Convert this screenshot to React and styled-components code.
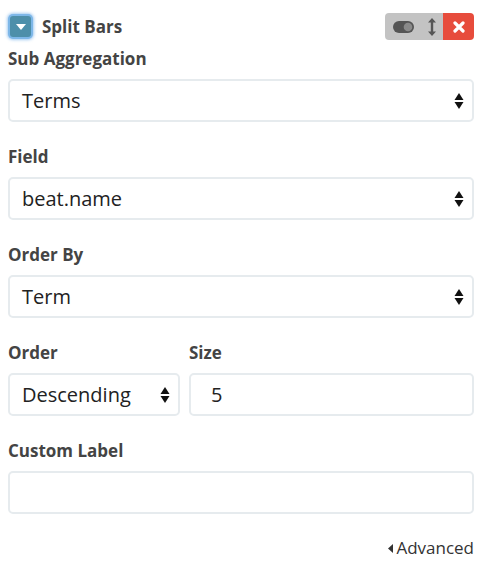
import React from 'react';
import styled, { createGlobalStyle } from 'styled-components';

const GlobalStyle = createGlobalStyle`
  html, body {
    margin: 0;
    padding: 0;
    background: #fff;
  }
  body {
    font-family: "Open Sans", "Noto Sans", "Liberation Sans", sans-serif;
  }
`;

const Panel = styled.div`
  width: 480px;
  box-sizing: border-box;
  padding: 13px 6px 0 8px;
`;

const Header = styled.div`
  display: flex;
  align-items: center;
  height: 27px;
  margin-bottom: 8px;
`;

const ToggleButton = styled.button`
  width: 21px;
  height: 21px;
  margin: 0 0 0 2px;
  padding: 0;
  border: none;
  border-radius: 3px;
  background: #4d8faa;
  box-shadow: 0 0 0 2px #7db7e8, 0 0 3px 3px rgba(90, 160, 230, 0.55);
  display: flex;
  align-items: center;
  justify-content: center;
`;

const Title = styled.span`
  margin-left: 11px;
  font-size: 17px;
  font-weight: 700;
  color: #444;
`;

const ButtonGroup = styled.div`
  margin-left: auto;
  display: flex;
  height: 27px;
  border-radius: 4px;
  overflow: hidden;
`;

const GroupButton = styled.div`
  display: flex;
  align-items: center;
  justify-content: center;
  width: ${p => p.$w}px;
  background: ${p => (p.$danger ? '#e74c3c' : '#c3c3c3')};
`;

const Group = styled.div`
  margin-bottom: 24px;
  flex: ${p => p.$flex || 'none'};
`;

const Row = styled.div`
  display: flex;
  gap: 9px;
`;

const Label = styled.div`
  font-size: 17px;
  line-height: 22px;
  font-weight: 700;
  color: #444;
  margin-bottom: 9px;
`;

const Box = styled.div`
  position: relative;
  box-sizing: border-box;
  height: 43px;
  width: ${p => (p.$w ? `${p.$w}px` : '100%')};
  border: 2px solid #e6ebee;
  border-radius: 5px;
  background: #fff;
  display: flex;
  align-items: center;
  padding-left: ${p => p.$pad || 12}px;
  font-size: 20px;
  color: #222;
`;

const Arrows = styled.svg`
  position: absolute;
  right: 8px;
  top: 50%;
  transform: translateY(-50%);
`;

const Footer = styled.div`
  display: flex;
  justify-content: flex-end;
  align-items: center;
  gap: 3px;
  font-size: 17px;
  line-height: 22px;
  color: #333;
  margin-top: -1px;
`;

const SelectArrows = () => (
  <Arrows width="10" height="18" viewBox="0 0 10 18">
    <path d="M5 1 L9.5 8 L0.5 8 Z" fill="#111" />
    <path d="M0.5 10 L9.5 10 L5 17 Z" fill="#111" />
  </Arrows>
);

const Select = ({ value, w }) => (
  <Box $w={w}>
    {value}
    <SelectArrows />
  </Box>
);

const Field = ({ label, children, flex }) => (
  <Group $flex={flex}>
    <Label>{label}</Label>
    {children}
  </Group>
);

export default function App() {
  return (
    <>
      <GlobalStyle />
      <Panel>
        <Header>
          <ToggleButton>
            <svg width="10" height="6" viewBox="0 0 10 6">
              <path d="M0 0 L10 0 L5 6 Z" fill="#fff" />
            </svg>
          </ToggleButton>
          <Title>Split Bars</Title>
          <ButtonGroup>
            <GroupButton $w={36}>
              <svg width="21" height="12" viewBox="0 0 21 12">
                <rect x="0" y="0" width="21" height="12" rx="6" fill="#555" />
                <circle cx="15" cy="6" r="4.3" fill="#8a8a8a" />
              </svg>
            </GroupButton>
            <GroupButton $w={22}>
              <svg width="8" height="18" viewBox="0 0 8 18">
                <path d="M4 0 L8 4.5 L5.2 4.5 L5.2 13.5 L8 13.5 L4 18 L0 13.5 L2.8 13.5 L2.8 4.5 L0 4.5 Z" fill="#555" />
              </svg>
            </GroupButton>
            <GroupButton $w={31} $danger>
              <svg width="12" height="12" viewBox="0 0 12 12">
                <path d="M2 2 L10 10 M10 2 L2 10" stroke="#fff" strokeWidth="3.2" strokeLinecap="round" />
              </svg>
            </GroupButton>
          </ButtonGroup>
        </Header>

        <Field label="Sub Aggregation">
          <Select value="Terms" />
        </Field>
        <Field label="Field">
          <Select value="beat.name" />
        </Field>
        <Field label="Order By">
          <Select value="Term" />
        </Field>
        <Row>
          <Field label="Order">
            <Select value="Descending" w={172} />
          </Field>
          <Field label="Size" flex="1">
            <Box $pad={20}>5</Box>
          </Field>
        </Row>
        <Field label="Custom Label">
          <Box />
        </Field>

        <Footer>
          <svg width="5" height="9" viewBox="0 0 5 9">
            <path d="M5 0 L0 4.5 L5 9 Z" fill="#333" />
          </svg>
          Advanced
        </Footer>
      </Panel>
    </>
  );
}
